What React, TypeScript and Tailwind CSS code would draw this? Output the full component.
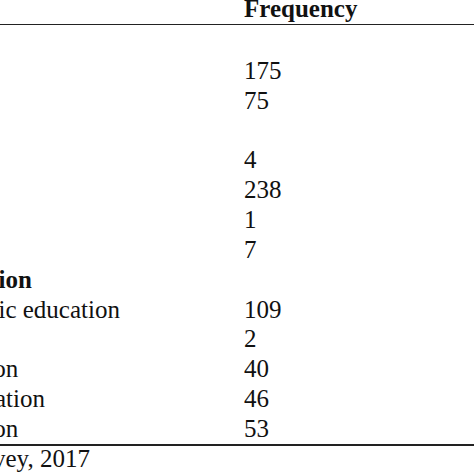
const rows: { label: string; value?: string; group?: boolean }[] = [
  { label: "Sex", group: true },
  { label: "Male", value: "175" },
  { label: "Female", value: "75" },
  { label: "Religion", group: true },
  { label: "Traditional", value: "4" },
  { label: "Christianity", value: "238" },
  { label: "Islam", value: "1" },
  { label: "Others", value: "7" },
  { label: "Level of education", group: true },
  { label: "Non-formal/Basic education", value: "109" },
  { label: "None", value: "2" },
  { label: "Tertiary education", value: "40" },
  { label: "Secondary education", value: "46" },
  { label: "Teacher education", value: "53" },
];

export default function App() {
  return (
    <div className="w-[474px] h-[474px] overflow-hidden bg-white text-[#111] font-['Liberation_Serif','Times_New_Roman',serif] text-[25px]">
      <div className="-ml-[164px] w-[638px]">
        {/* Header */}
        <div className="grid grid-cols-[408px_1fr] font-bold leading-[17px] pb-[7px] border-b border-[#222]">
          <div className="whitespace-nowrap">Variable</div>
          <div>Frequency</div>
        </div>

        {/* Body */}
        <div className="pt-[1px] leading-[29.85px] border-b-2 border-[#222]">
          {rows.map((r) => (
            <div key={r.label} className="grid grid-cols-[408px_1fr]">
              <div className={`whitespace-nowrap ${r.group ? "font-bold" : ""}`}>
                {r.label}
              </div>
              <div>{r.value ?? "\u00a0"}</div>
            </div>
          ))}
        </div>

        {/* Source */}
        <div className="-ml-[18px] leading-[26px] whitespace-nowrap">
          Source: Field Survey, 2017
        </div>
      </div>
    </div>
  );
}
